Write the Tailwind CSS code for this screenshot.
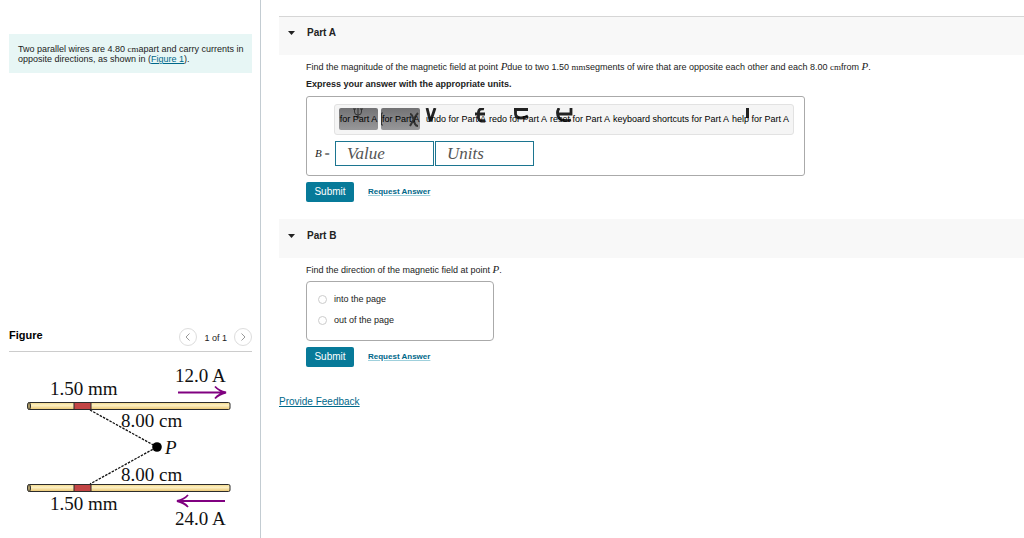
<!DOCTYPE html>
<html lang="en">
<head>
<meta charset="utf-8">
<title>Magnetic field of two parallel wires</title>
<script src="https://cdn.jsdelivr.net/npm/@tailwindcss/browser@4"></script>
</head>
<body class="bg-white text-[#222] font-['Liberation_Sans',Arial,sans-serif] text-[9px] leading-[10px]">
<div class="flex min-h-screen">
  <aside class="flex w-[261px] shrink-0 flex-col border-r border-[#c3ccd2] pl-[9px] pr-2 pt-[34px]">
    <p class="bg-[#e7f6f5] py-[10px] pl-[9px] pr-1 pb-[9px]">Two parallel wires are 4.80 <span class="font-['Liberation_Serif',serif]">cm</span>apart and carry currents in opposite directions, as shown in (<a href="#figure" class="text-[#00688a] underline">Figure 1</a>).</p>
    <section id="figure" class="mt-auto">
      <header class="flex h-[28px] items-center justify-between border-b border-[#ccc]">
        <h2 class="pb-[6px] text-[11px] font-bold text-black">Figure</h2>
        <div class="flex items-center gap-[7px] pb-px">
          <button type="button" aria-label="Previous figure" class="flex size-[18px] items-center justify-center rounded-full border border-[#ddd]"><svg class="size-2" viewBox="0 0 8 8" fill="none" stroke="#999" aria-hidden="true"><path d="M5.5 0.5L2 4L5.5 7.5"/></svg></button>
          <span class="pt-[2px]">1 of 1</span>
          <button type="button" aria-label="Next figure" class="flex size-[18px] items-center justify-center rounded-full border border-[#ddd]"><svg class="size-2" viewBox="0 0 8 8" fill="none" stroke="#999" aria-hidden="true"><path d="M2.5 0.5L6 4L2.5 7.5"/></svg></button>
        </div>
      </header>
      <svg class="block h-[186px] w-full" viewBox="9 352 243 186" role="img" aria-label="Two parallel wires and point P">
        <defs>
          <linearGradient id="wire" x1="0" y1="0" x2="0" y2="1"><stop offset="0" stop-color="#f1d583"/><stop offset=".4" stop-color="#fdf0c4"/><stop offset="1" stop-color="#eac56e"/></linearGradient>
        </defs>
        <g stroke="#2b2b2b" stroke-width="1">
          <rect x="28" y="402.5" width="202" height="7" rx="1.5" fill="url(#wire)"/>
          <rect x="74" y="402.5" width="17" height="7" fill="#c34545"/>
          <ellipse cx="29" cy="406" rx="1.5" ry="3.5" fill="#b5a36c"/>
          <rect x="28" y="484.500" width="202" height="7" rx="1.5" fill="url(#wire)"/>
          <rect x="74" y="484.500" width="17" height="7" fill="#c34545"/>
          <ellipse cx="29" cy="488" rx="1.5" ry="3.5" fill="#b5a36c"/>
        </g>
        <path d="M90 410L157 447L90 484" fill="none" stroke="#111" stroke-width="1.3" stroke-dasharray="2.5 1.2"/>
        <circle cx="157" cy="447" r="4.800" fill="#000"/>
        <g fill="none" stroke="#800080" stroke-width="1.800">
          <path d="M178 392.500H225M215 386.500Q219 391 226 392.500Q219 394 215 398.500"/>
          <path d="M225 501H178M188 495Q184 499.500 177 501Q184 502.500 188 507"/>
        </g>
        <g fill="#111" font-family="Liberation Serif, serif" font-size="19">
          <text x="50" y="395">1.50 mm</text>
          <text x="175" y="382">12.0 A</text>
          <text x="121" y="427">8.00 cm</text>
          <text x="165" y="454" font-style="italic">P</text>
          <text x="121" y="481">8.00 cm</text>
          <text x="50" y="510">1.50 mm</text>
          <text x="175" y="525">24.0 A</text>
        </g>
      </svg>
    </section>
  </aside>

  <main class="min-w-0 flex-1 pl-[18px] pt-4">
    <section>
      <h2 class="flex h-[39px] items-center gap-3 border-t border-[#d6d6d6] bg-[#f8f8f8] pb-[6px] pl-[9px] text-[10px] font-bold"><svg class="h-1 w-[7px]" viewBox="0 0 7 4" aria-hidden="true"><path d="M0 0H7L3.500 4Z" fill="#222"/></svg>Part A</h2>
      <div class="pl-[27px]">
        <p class="pt-[6px]">Find the magnitude of the magnetic field at point <i class="font-['Liberation_Serif',serif] text-[11px]">P</i>due to two 1.50 <span class="font-['Liberation_Serif',serif]">mm</span>segments of wire that are opposite each other and each 8.00 <span class="font-['Liberation_Serif',serif]">cm</span>from <i class="font-['Liberation_Serif',serif] text-[11px]">P</i>.</p>
        <p class="pt-[7px] font-bold">Express your answer with the appropriate units.</p>
        <div class="mt-[7px] w-[499px] max-w-full rounded-[3px] border border-[#aaa] px-2 pb-[9px] pt-[7px]">
          <div role="toolbar" aria-label="Answer tools" class="ml-[19px] mr-[2px] flex h-[31px] items-center justify-between whitespace-nowrap rounded-[3px] border border-[#e2e2e2] bg-[#f5f5f5] px-1 pb-px text-black">
            <button type="button" class="relative h-[22px] w-[39px] rounded-[2px] bg-linear-to-b from-[#727274] to-[#98989a] text-center"><svg class="absolute left-[13px] top-0 h-[10px] w-[12px]" viewBox="0 0 12 10" fill="none" stroke="#333" aria-hidden="true"><path d="M1 1H4M8 1H11M2.500 1V4Q2.500 7 6 7Q9.500 7 9.500 4V1M6 0V9M4 9H8"/></svg><span class="relative">for Part A</span></button>
            <button type="button" class="relative h-[22px] w-[39px] rounded-[2px] bg-linear-to-b from-[#727274] to-[#98989a] pl-px text-left"><svg class="absolute left-0 top-0 h-[22px] w-[39px]" viewBox="0 0 39 22" fill="none" stroke="#333" aria-hidden="true"><path d="M2 5H0.500V17H2"/><path stroke-width="2" d="M29 6Q31 6 32 10L34 16Q35 18 37 18M37 5Q35 7 33 11L29 18"/></svg><span class="relative">for Part A</span></button>
            <button type="button" class="relative ml-[3px] h-[22px]"><svg class="absolute -left-px top-0 h-[14px] w-3" viewBox="0 0 12 14" fill="none" stroke="#222" stroke-width="2.800" aria-hidden="true"><path d="M2 0L5 12H6L10 0"/></svg><svg class="absolute right-0 top-0 h-[15px] w-[11px]" viewBox="0 0 11 15" fill="none" stroke="#222" stroke-width="2.800" aria-hidden="true"><path d="M9 1Q4 0 3.500 4V10Q4 14 10 13M0 6H10"/></svg><span class="relative">undo for Part A</span></button>
            <button type="button" class="relative h-[22px]"><svg class="absolute left-6 top-0 h-[12px] w-4" viewBox="0 0 16 12" fill="none" stroke="#222" stroke-width="2.800" aria-hidden="true"><path d="M1 1.500H15M2.500 1V6Q3 10 8 10Q12 10 15 8"/></svg><span class="relative">redo for Part A</span></button>
            <button type="button" class="relative h-[22px]"><svg class="absolute left-[6px] top-0 h-[15px] w-[17px]" viewBox="0 0 17 15" fill="none" stroke="#222" stroke-width="2.800" aria-hidden="true"><path d="M3 0Q0 5 3 10Q6 14 15 12M2 6H15V0"/></svg><span class="relative">reset for Part A</span></button>
            <button type="button" class="h-[22px]">keyboard shortcuts for Part A</button>
            <button type="button" class="relative h-[22px]"><svg class="absolute left-[14px] top-0 h-[10px] w-[3px]" viewBox="0 0 3 10" aria-hidden="true"><path d="M0 0H3V10H0Z" fill="#222"/></svg><span class="relative">help for Part A</span></button>
          </div>
          <div class="mt-[6px] flex items-center gap-px font-['Liberation_Serif',serif] italic">
            <label for="value" class="w-[19px] text-[11px] whitespace-nowrap">B<span class="text-[9px]"> =</span></label>
            <input id="value" type="text" placeholder="Value" class="h-[25px] w-[99px] border border-[#1c7590] bg-white pl-[11px] text-[17px] placeholder:text-[#555]">
            <input type="text" aria-label="Units" placeholder="Units" class="h-[25px] w-[99px] border border-[#1c7590] bg-white pl-[11px] text-[17px] placeholder:text-[#555]">
          </div>
        </div>
        <div class="mt-[6px] flex items-center gap-[14px]">
          <button type="button" class="h-5 w-12 rounded-[2px] bg-[#077a99] text-[10px] text-white">Submit</button>
          <a href="#request-a" class="text-[8px] font-bold text-[#00688a] underline decoration-[#9fd0dc]">Request Answer</a>
        </div>
      </div>
    </section>

    <section class="mt-[17px]">
      <h2 class="flex h-[39px] items-center gap-3 bg-[#f8f8f8] pb-[6px] pl-[9px] text-[10px] font-bold"><svg class="h-1 w-[7px]" viewBox="0 0 7 4" aria-hidden="true"><path d="M0 0H7L3.500 4Z" fill="#222"/></svg>Part B</h2>
      <div class="pl-[27px]">
        <p class="pt-[6px]">Find the direction of the magnetic field at point <i class="font-['Liberation_Serif',serif] text-[11px]">P</i>.</p>
        <fieldset class="mt-[6px] flex h-[60px] w-[188px] flex-col gap-[11px] rounded-[4px] border border-[#aaa] pl-[11px] pt-[12px]">
          <label class="flex items-center gap-[7px]"><input type="radio" name="direction" class="size-[9px] appearance-none rounded-full border border-[#ccc] checked:bg-[#077a99]">into the page</label>
          <label class="flex items-center gap-[7px]"><input type="radio" name="direction" class="size-[9px] appearance-none rounded-full border border-[#ccc] checked:bg-[#077a99]">out of the page</label>
        </fieldset>
        <div class="mt-[6px] flex items-center gap-[14px]">
          <button type="button" class="h-5 w-12 rounded-[2px] bg-[#077a99] text-[10px] text-white">Submit</button>
          <a href="#request-b" class="text-[8px] font-bold text-[#00688a] underline decoration-[#9fd0dc]">Request Answer</a>
        </div>
      </div>
    </section>
    <a href="#feedback" class="mt-[30px] inline-block text-[10px] text-[#00688a] underline">Provide Feedback</a>
  </main>
</div>
</body>
</html>
